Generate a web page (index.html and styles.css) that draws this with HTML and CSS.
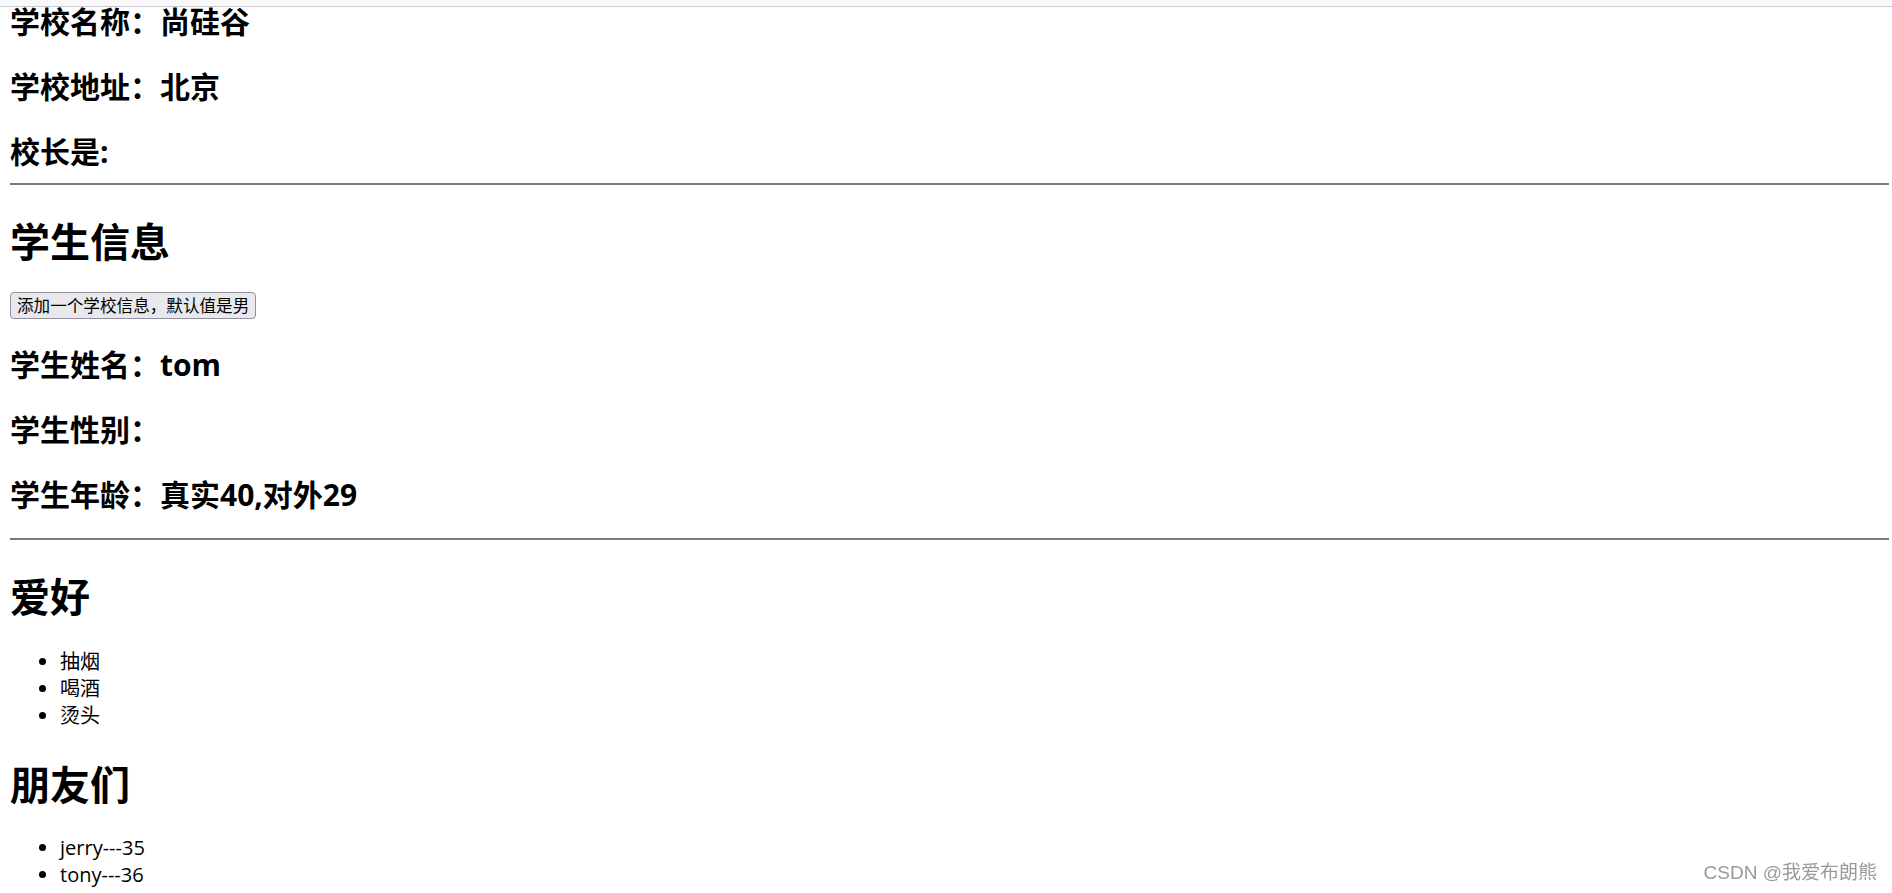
FILE: index.html
```html
<!DOCTYPE html>
<html lang="zh-CN">
<head>
<meta charset="utf-8">
<title>学校信息</title>
<link rel="stylesheet" href="styles.css">
</head>
<body>
<div class="chrome-edge"></div>
<div class="page">
  <h3 class="field first">学校名称：尚硅谷</h3>
  <h3 class="field">学校地址：北京</h3>
  <h3 class="field">校长是:</h3>
  <hr class="rule">
  <h2 class="heading">学生信息</h2>
  <button class="btn" type="button">添加一个学校信息，默认值是男</button>
  <h3 class="field">学生姓名：tom</h3>
  <h3 class="field">学生性别：</h3>
  <h3 class="field">学生年龄：真实40,对外29</h3>
  <hr class="rule wide">
  <h2 class="heading">爱好</h2>
  <ul class="list">
    <li>抽烟</li>
    <li>喝酒</li>
    <li>烫头</li>
  </ul>
  <h2 class="heading">朋友们</h2>
  <ul class="list friends">
    <li>jerry---35</li>
    <li>tony---36</li>
  </ul>
</div>
<div class="watermark">CSDN @我爱布朗熊</div>
</body>
</html>
```
FILE: styles.css
```css
html, body {
  margin: 0;
  padding: 0;
  background: #ffffff;
}

body {
  font-family: "Open Sans", "Noto Sans CJK SC", sans-serif;
  color: #000000;
  overflow: hidden;
  height: 893px;
}

.chrome-edge {
  position: fixed;
  top: 0;
  left: 0;
  right: 0;
  height: 6px;
  background: #f9f9fb;
  border-bottom: 1px solid #cbcbcf;
  z-index: 2;
}

.page {
  display: flex;
  flex-direction: column;
  align-items: stretch;
  padding: 0 3px 0 10px;
}

.field {
  margin: 25px 0 0;
  font-size: 30px;
  line-height: 40px;
  font-weight: 700;
}

.field.first {
  margin-top: 2px;
}

.btn + .field {
  margin-top: 26px;
}

.rule {
  margin: 11px 0 0;
  height: 0;
  border: 0;
  border-top: 2px solid #7a7a7a;
}

.rule.wide {
  margin-top: 23px;
}

.heading {
  margin: 33px 0 0;
  font-size: 40px;
  line-height: 48px;
  font-weight: 700;
}

.list + .heading {
  margin-top: 32px;
}

.btn {
  align-self: flex-start;
  margin-top: 26px;
  height: 27px;
  padding: 0 6px;
  font-family: "Noto Sans CJK SC", sans-serif;
  font-size: 16.6px;
  line-height: 25px;
  color: #000000;
  background: #e9e9ed;
  border: 1px solid #8f8f9d;
  border-radius: 4px;
}

.list {
  margin: 27px 0 0;
  padding-left: 50px;
  list-style: disc;
  font-size: 20px;
  line-height: 27px;
}

.list.friends {
  margin-top: 25px;
}

.watermark {
  position: fixed;
  right: 15px;
  bottom: 8px;
  font-family: "Liberation Sans", "Noto Sans CJK SC", sans-serif;
  font-size: 19px;
  line-height: 24px;
  color: #9a9a9a;
  text-shadow: 0 0 1px #ffffff;
}
```
